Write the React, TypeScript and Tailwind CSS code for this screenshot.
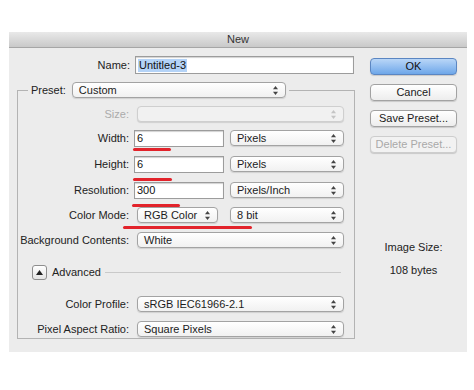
const font = "font-['Liberation_Sans','DejaVu_Sans',sans-serif]";

const Arrows = ({ faded = false }: { faded?: boolean }) => (
  <svg width="5" height="9" viewBox="0 0 5 9" className="shrink-0">
    <path d="M2.5 0 L5 3.2 L0 3.2 Z" fill={faded ? "#c4c4c4" : "#444"} />
    <path d="M2.5 9 L5 5.8 L0 5.8 Z" fill={faded ? "#c4c4c4" : "#444"} />
  </svg>
);

const Popup = ({
  value,
  w,
  disabled = false,
}: {
  value: string;
  w: string;
  disabled?: boolean;
}) => (
  <div
    className={`${w} h-[16px] flex items-center justify-between pl-[6px] pr-[7px] rounded-[4px] border shadow-[0_1px_1px_rgba(0,0,0,0.12)] ${
      disabled
        ? "border-[#cfcfcf] bg-[#f1f1f1]"
        : "border-[#a3a3a3] bg-gradient-to-b from-white to-[#f1f1f1]"
    }`}
  >
    <span className="text-[11px] leading-none text-[#1c1c1c]">{value}</span>
    <Arrows faded={disabled} />
  </div>
);

const TextBox = ({ value, w }: { value: string; w: string }) => (
  <div
    className={`${w} h-[17px] flex items-center pl-[2px] bg-white border border-[#9c9c9c] shadow-[inset_0_1px_1px_rgba(0,0,0,0.18)] text-[11px] text-[#111]`}
  >
    {value}
  </div>
);

const Row = ({
  label,
  mt,
  children,
  dim = false,
}: {
  label: string;
  mt: string;
  children: React.ReactNode;
  dim?: boolean;
}) => (
  <div className={`relative flex items-center h-[17px] ${mt}`}>
    <span
      className={`w-[112px] shrink-0 text-right text-[11px] pr-[1px] ${
        dim ? "text-[#ababab]" : "text-[#222]"
      }`}
    >
      {label}
    </span>
    <div className="flex items-center gap-[6px] ml-[4px]">{children}</div>
  </div>
);

const Mark = ({ cls }: { cls: string }) => (
  <span className={`absolute h-[3px] rounded-full bg-[#e2232b] ${cls}`} />
);

const Button = ({
  label,
  primary = false,
  disabled = false,
}: {
  label: string;
  primary?: boolean;
  disabled?: boolean;
}) => (
  <div
    className={`w-[87px] h-[17px] flex items-center justify-center rounded-[4px] border text-[11px] shadow-[0_1px_1px_rgba(0,0,0,0.15)] ${
      primary
        ? "border-[#5b86c2] bg-gradient-to-b from-[#b9d6f7] to-[#6ea7e9] text-[#111]"
        : disabled
          ? "border-[#cdcdcd] bg-[#f2f2f2] text-[#a9a9a9]"
          : "border-[#a2a2a2] bg-gradient-to-b from-white to-[#ededed] text-[#1a1a1a]"
    }`}
  >
    {label}
  </div>
);

export default function App() {
  return (
    <div className={`w-[474px] h-[390px] bg-white pt-[32px] pl-[9px] ${font}`}>
      <div className="w-[458px] h-[320px] bg-[#ececec] flex flex-col">
        <div className="h-[16px] flex items-center justify-center bg-gradient-to-b from-[#e9e9e9] to-[#c9c9c9] border-b border-[#a6a6a6] text-[11px] text-[#333]">
          New
        </div>
        <div className="flex">
          <div className="w-[346px] flex flex-col pt-[8px]">
            <div className="flex items-center h-[18px]">
              <span className="w-[121px] text-right text-[11px] text-[#222]">Name:</span>
              <div className="ml-[5px] w-[219px] h-[18px] flex items-center pl-[2px] bg-white border border-[#9c9c9c] shadow-[inset_0_1px_1px_rgba(0,0,0,0.18)]">
                <span className="bg-[#b4d3f7] text-[11px] leading-[13px] px-[1px] text-[#111]">Untitled-3</span>
              </div>
            </div>

            <fieldset className="ml-[8px] mt-[8px] w-[338px] h-[257px] border border-[#b3b3b3] pr-[9px]">
              <legend className="ml-[10px] px-[3px] flex items-center">
                <span className="text-[11px] text-[#222]">Preset:</span>
                <span className="ml-[6px]">
                  <Popup value="Custom" w="w-[214px]" />
                </span>
              </legend>

              <Row label="Size:" mt="mt-[7px]" dim>
                <span className="ml-[3px]">
                  <Popup value="" w="w-[207px]" disabled />
                </span>
              </Row>
              <Row label="Width:" mt="mt-[7px]">
                <TextBox value="6" w="w-[90px]" />
                <Popup value="Pixels" w="w-[114px]" />
                <Mark cls="left-[115px] top-[18px] w-[38px]" />
              </Row>
              <Row label="Height:" mt="mt-[9px]">
                <TextBox value="6" w="w-[90px]" />
                <Popup value="Pixels" w="w-[114px]" />
                <Mark cls="left-[115px] top-[22px] w-[39px]" />
              </Row>
              <Row label="Resolution:" mt="mt-[9px]">
                <TextBox value="300" w="w-[90px]" />
                <Popup value="Pixels/Inch" w="w-[114px]" />
                <Mark cls="left-[114px] top-[22px] w-[48px]" />
              </Row>
              <Row label="Color Mode:" mt="mt-[8px]">
                <span className="ml-[3px]">
                  <Popup value="RGB Color" w="w-[81px]" />
                </span>
                <span className="ml-[6px]">
                  <Popup value="8 bit" w="w-[114px]" />
                </span>
                <Mark cls="left-[105px] top-[19px] w-[129px]" />
              </Row>
              <Row label="Background Contents:" mt="mt-[8px]">
                <span className="ml-[3px]">
                  <Popup value="White" w="w-[207px]" />
                </span>
              </Row>

              <div className="flex items-center h-[17px] mt-[15px] pl-[14px]">
                <div className="w-[15px] h-[15px] rounded-[3px] border border-[#8e8e8e] bg-gradient-to-b from-white to-[#e4e4e4] flex items-center justify-center">
                  <svg width="7" height="5" viewBox="0 0 7 5">
                    <path d="M3.5 0 L7 5 L0 5 Z" fill="#222" />
                  </svg>
                </div>
                <span className="ml-[5px] text-[11px] text-[#222]">Advanced</span>
                <div className="ml-[4px] w-[236px] h-px bg-[#c9c9c9]" />
              </div>

              <Row label="Color Profile:" mt="mt-[15px]">
                <span className="ml-[3px]">
                  <Popup value="sRGB IEC61966-2.1" w="w-[207px]" />
                </span>
              </Row>
              <Row label="Pixel Aspect Ratio:" mt="mt-[8px]">
                <span className="ml-[3px]">
                  <Popup value="Square Pixels" w="w-[207px]" />
                </span>
              </Row>
            </fieldset>
          </div>

          <div className="w-[112px] flex flex-col items-start pl-[15px] pt-[10px]">
            <div className="flex flex-col gap-[9px]">
              <Button label="OK" primary />
              <Button label="Cancel" />
              <Button label="Save Preset..." />
              <Button label="Delete Preset..." disabled />
            </div>
            <div className="w-[87px] mt-[86px] flex flex-col items-center gap-[6px] text-[11px] text-[#222]">
              <span>Image Size:</span>
              <span>108 bytes</span>
            </div>
          </div>
        </div>
      </div>
    </div>
  );
}
